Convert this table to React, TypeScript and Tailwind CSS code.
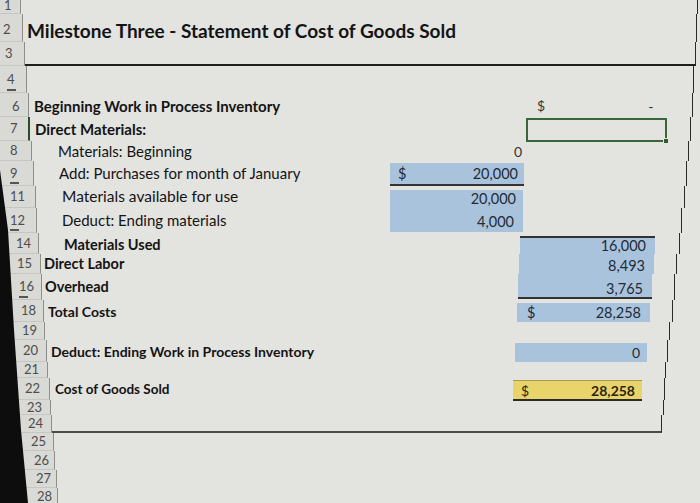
import React from "react";

type RowProps = {
  n?: string;
  h: string;
  hw: string;
  np: string;
  cw: string;
  mark?: boolean;
  hcls?: string;
  ccls?: string;
  children?: React.ReactNode;
};

const Row = ({ n, h, hw, np, cw, mark, hcls = "", ccls = "", children }: RowProps) => (
  <div className={`flex shrink-0 ${h}`}>
    <div
      className={`relative flex shrink-0 items-center border-b border-r border-b-[#c6c6c3] border-r-[#8e8e8b] bg-[#d9d9d6] text-[13px] leading-none text-[#4d4d4d] ${hw} ${np} ${hcls}`}
    >
      {n}
      {mark && <span className="absolute bottom-[1px] h-0 w-[9px] border-t-2 border-dashed border-[#555]" />}
    </div>
    <div className={`flex shrink-0 ${cw} ${ccls}`}>{children}</div>
  </div>
);

const App = () => {
  return (
    <div className="relative h-[503px] w-[700px] overflow-hidden bg-[#e3e3e0] font-['Lato',sans-serif] text-[#141414]">
      <div className="flex flex-col">
        <Row n="1" h="h-[14px]" hw="w-[21px]" np="pl-[4px]" hcls="!items-end pb-[1px]" cw="w-[677px]" ccls="border-r border-[#2a2a2a]" />
        <Row n="2" h="h-[28px]" hw="w-[23px]" np="pl-[3px]" hcls="pt-[4px]" cw="w-[674px]" ccls="border-r border-[#2a2a2a] items-center">
          <div className="pl-[4px] pt-[5px] text-[19px] font-bold leading-none">Milestone Three - Statement of Cost of Goods Sold</div>
        </Row>
        <Row n="3" h="h-[24px]" hw="w-[25px]" np="pl-[5px]" cw="w-[671px]" ccls="border-r border-b-2 border-r-[#2a2a2a] border-b-[#1e1e1e]" />
        <Row n="4" h="h-[27px]" hw="w-[27px]" np="pl-[7px]" mark cw="w-[667px]" ccls="border-r border-[#2a2a2a]" />

        <Row n="6" h="h-[24px]" hw="w-[29px]" np="pl-[12px]" hcls="pt-[3px]" cw="w-[664px]" ccls="border-r border-[#2a2a2a] items-center text-[15px]">
          <div className="w-[508px] shrink-0 pl-[5px] pt-[3px] font-bold">Beginning Work in Process Inventory</div>
          <div className="text-[14px] text-[#333]">$</div>
          <div className="ml-[103px] pt-[2px] text-[14px] text-[#333]">-</div>
        </Row>
        <Row n="7" h="h-[24px]" hw="w-[30px]" np="pl-[10px]" hcls="!border-r-2 !border-r-[#2c4a2c]" cw="w-[661px]" ccls="border-r border-[#2a2a2a] text-[15px]">
          <div className="flex w-[496px] shrink-0 items-center pl-[5px] font-bold">Direct Materials:</div>
          <div className="relative mt-[1px] h-[24px] w-[141px] shrink-0 border-2 border-[#3a673a]">
            <span className="absolute -bottom-[4px] -right-[4px] h-[6px] w-[6px] border border-[#e3e3e0] bg-[#2f5c2f]" />
          </div>
        </Row>
        <Row n="8" h="h-[20px]" hw="w-[32px]" np="pl-[10px]" cw="w-[657px]" ccls="border-r border-[#2a2a2a] items-center text-[15px]">
          <div className="w-[358px] shrink-0 pl-[26px]">Materials: Beginning</div>
          <div className="w-[132px] shrink-0 text-right text-[14px] text-[#333]">0</div>
        </Row>
        <Row n="9" h="h-[25px]" hw="w-[34px]" np="pl-[10px]" mark cw="w-[653px]" ccls="border-r border-[#2a2a2a] text-[15px]">
          <div className="flex w-[356px] shrink-0 items-center pl-[25px]">Add: Purchases for month of January</div>
          <div className="mt-[2px] flex h-[23px] w-[134px] shrink-0 items-center justify-between border-b-2 border-[#333] bg-[#a9c3dc] pl-[8px] pr-[6px] text-[14.5px] text-[#1f2b38]">
            <span>$</span>
            <span>20,000</span>
          </div>
        </Row>
        <Row n="11" h="h-[22px]" hw="w-[36px]" np="pl-[10px]" cw="w-[649px]" ccls="border-r border-[#2a2a2a] text-[15.5px]">
          <div className="flex w-[354px] shrink-0 items-center pl-[26px]">Materials available for use</div>
          <div className="mt-[4px] flex h-[18px] w-[133px] shrink-0 items-center justify-end bg-[#a9c3dc] pr-[7px] text-[14.5px] text-[#1f2b38]">20,000</div>
        </Row>
        <Row n="12" h="h-[25px]" hw="w-[37px]" np="pl-[10px]" mark cw="w-[645px]" ccls="border-r border-[#2a2a2a] text-[15px]">
          <div className="flex w-[353px] shrink-0 items-center pl-[25px]">Deduct: Ending materials</div>
          <div className="flex h-[24px] w-[133px] shrink-0 items-start justify-end bg-[#a9c3dc] pr-[9px] pt-[3px] text-[14.5px] text-[#1f2b38]">4,000</div>
        </Row>

        <Row n="14" h="h-[21px]" hw="w-[39px]" np="pl-[16px]" cw="w-[641px]" ccls="border-r border-[#2a2a2a] text-[14.5px]">
          <div className="flex w-[481px] shrink-0 items-center pl-[25px] pt-[2px] font-bold">Materials Used</div>
          <div className="mt-[3px] flex h-[18px] w-[135px] shrink-0 items-center justify-end border-t-2 border-[#333] bg-[#a9c3dc] pr-[9px] text-[14.5px] text-[#1f2b38]">16,000</div>
        </Row>
        <Row n="15" h="h-[20px]" hw="w-[41px]" np="pl-[17px]" cw="w-[636px]" ccls="border-r border-[#2a2a2a] text-[14.5px]">
          <div className="flex w-[478px] shrink-0 items-center pl-[3px] font-bold">Direct Labor</div>
          <div className="flex h-[20px] w-[135px] shrink-0 items-center justify-end bg-[#a9c3dc] pr-[9px] pt-[3px] text-[14.5px] text-[#1f2b38]">8,493</div>
        </Row>
        <Row n="16" h="h-[26px]" hw="w-[42px]" np="pl-[19px]" mark cw="w-[633px]" ccls="border-r border-[#2a2a2a] text-[14.5px]">
          <div className="flex w-[476px] shrink-0 items-start pl-[3px] pt-[2px] font-bold">Overhead</div>
          <div className="flex h-[25px] w-[134px] shrink-0 items-center justify-end border-b-2 border-[#333] bg-[#a9c3dc] pr-[9px] pt-[6px] text-[14.5px] text-[#1f2b38]">3,765</div>
        </Row>
        <Row n="18" h="h-[22px]" hw="w-[44px]" np="pl-[21px]" cw="w-[629px]" ccls="border-r border-[#2a2a2a] text-[14px]">
          <div className="flex w-[473px] shrink-0 items-center pl-[4px] font-bold">Total Costs</div>
          <div className="mt-[3px] flex h-[19px] w-[133px] shrink-0 items-center justify-between bg-[#a9c3dc] pl-[10px] pr-[9px] text-[14.5px] text-[#1f2b38]">
            <span>$</span>
            <span>28,258</span>
          </div>
        </Row>
        <Row n="19" h="h-[18px]" hw="w-[45px]" np="pl-[22px]" cw="w-[625px]" ccls="border-r border-[#2a2a2a]" />
        <Row n="20" h="h-[22px]" hw="w-[47px]" np="pl-[23px]" cw="w-[621px]" ccls="border-r border-[#2a2a2a] text-[14px]">
          <div className="flex w-[468px] shrink-0 items-center pl-[4px] font-bold">Deduct: Ending Work in Process Inventory</div>
          <div className="mt-[3px] flex h-[19px] w-[132px] shrink-0 items-center justify-end bg-[#a9c3dc] pr-[7px] text-[14px] text-[#1f2b38]">0</div>
        </Row>
        <Row n="21" h="h-[16px]" hw="w-[48px]" np="pl-[24px]" cw="w-[618px]" ccls="border-r border-[#2a2a2a]" />
        <Row n="22" h="h-[22px]" hw="w-[50px]" np="pl-[25px]" cw="w-[615px]" ccls="border-r border-[#2a2a2a] text-[13.5px]">
          <div className="flex w-[463px] shrink-0 items-center pl-[5px] font-bold">Cost of Goods Sold</div>
          <div className="mt-[2px] flex h-[21px] w-[129px] shrink-0 items-center justify-between border-b-2 border-t border-b-[#2b2b2b] border-t-[#a89a4a] bg-[#e9d46c] pl-[8px] pr-[7px] text-[14px] text-[#2a2410]">
            <span>$</span>
            <span className="font-bold">28,258</span>
          </div>
        </Row>
        <Row n="23" h="h-[15px]" hw="w-[51px]" np="pl-[27px]" cw="w-[613px]" ccls="border-r border-[#2a2a2a]" />
        <Row n="24" h="h-[18px]" hw="w-[52px]" np="pl-[28px]" cw="w-[610px]" ccls="border-r border-b-2 border-r-[#2a2a2a] border-b-[#4a4a4a]" />
        <Row n="25" h="h-[18px]" hw="w-[54px]" np="pl-[31px]" cw="w-[646px]" />
        <Row n="26" h="h-[19px]" hw="w-[55px]" np="pl-[34px]" cw="w-[645px]" />
        <Row n="27" h="h-[18px]" hw="w-[57px]" np="pl-[36px]" cw="w-[643px]" />
        <Row n="28" h="h-[16px]" hw="w-[58px]" np="pl-[37px]" hcls="!items-start pt-[2px]" cw="w-[642px]" />
      </div>

      {/* monitor bezel on the lower left */}
      <svg className="absolute left-0 top-0" width="700" height="503" viewBox="0 0 700 503">
        <polygon points="0,170 8,230 14,330 21,430 28,503 0,503" fill="#0d0d0d" />
      </svg>
    </div>
  );
};

export default App;
